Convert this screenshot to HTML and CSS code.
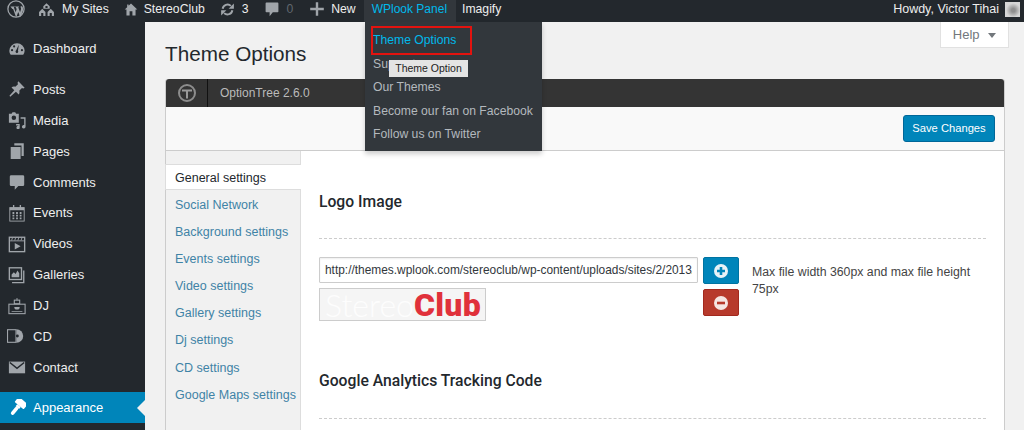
FILE: index.html
```html
<!DOCTYPE html>
<html lang="en">
<head>
  <meta charset="UTF-8" />
  <meta name="viewport" content="width=device-width, initial-scale=1.0" />
  <title>Theme Options</title>
  <link rel="stylesheet" href="styles.css">
</head>
<body>

  <header class="adminbar">
    <div class="bar-left">
      <span class="bar-item bar-logo">
        <svg class="wp-big" viewBox="0 0 20 20"><circle cx="10" cy="10" r="9" fill="none" stroke="#a0a5aa" stroke-width="1.400"/><path d="M3.800 7.300h4.800v.6l-1 .2 2 5.600 1.100-3.300-.8-2.300-.8-.2v-.6h4.300v.6l-.9.2 2 5.500.9-2.800c.5-1.600-.1-2.600-.6-3.300.5-.9 2-.7 2.300-.2.900 1.400.9 3.600.5 5l-2.500 6.300-.6.100-2-5.500-2 5.500-.6-.1-3.100-8.500-.8-.2z" fill="#a0a5aa"/></svg>
      </span>
      <span class="bar-item bar-sites">
        <svg class="sites" viewBox="0 0 24 20"><path d="M12 1l4.500 4.500v3.500h-9v-3.500zM6 9l4.500 4.500v5.500h-9v-5.500zM18 9l4.500 4.500v5.500h-9v-5.500z" fill="#a0a5aa"/><path d="M4.500 15h3v4h-3zM16.500 15h3v4h-3zM10.500 5h3v3h-3z" fill="#23282d"/></svg>
        My Sites
      </span>
      <span class="bar-item">
        <svg class="home" viewBox="0 0 20 20"><path d="M10 1.500l9 8.500h-2.500v8.500h-4.500v-6h-4v6h-4.500v-8.500h-2.500l3.500-3.300v-3.700h2v1.800z" fill="#a0a5aa"/></svg>
        StereoClub
      </span>
      <span class="bar-item">
        <svg class="sync" viewBox="0 0 20 20"><path d="M3.500 9a6.600 6.600 0 0 1 11-3.800M16.500 11a6.600 6.600 0 0 1-11 3.800" fill="none" stroke="#a0a5aa" stroke-width="2.600"/><path d="M18.500 2v7h-7zM1.500 18v-7h7z" fill="#a0a5aa"/></svg>
        3
      </span>
      <span class="bar-item bar-dim">
        <svg class="bar-icon" viewBox="0 0 20 20"><path d="M3 2h14a1 1 0 0 1 1 1v10a1 1 0 0 1-1 1h-6l-4 5v-5h-4a1 1 0 0 1-1-1v-10a1 1 0 0 1 1-1z" fill="#a0a5aa"/></svg>
        0
      </span>
      <span class="bar-item bar-new">
        <svg class="bar-icon" viewBox="0 0 20 20"><path d="M8.500 1.500h3v7h7v3h-7v7h-3v-7h-7v-3h7z" fill="#a0a5aa"/></svg>
        New
      </span>
      <span class="bar-item bar-open">WPlook Panel</span>
      <span class="bar-item bar-imagify">Imagify</span>
    </div>
    <div class="bar-right">
      Howdy, Victor Tihai
      <span class="avatar"></span>
    </div>
  </header>

  <div class="wrap">
    <nav class="sidebar">
      <ul class="menu">
        <li class="menu-item"><svg class="menu-icon" viewBox="0 0 20 20"><path d="M10 3.500a8.500 8.500 0 0 0-8.500 8.500c0 1.800.6 3.300 1.600 4.500h13.800a8.500 8.500 0 0 0 1.600-4.500 8.500 8.500 0 0 0-8.500-8.500zM4.500 12.500a1.200 1.200 0 1 1 0-2.400 1.200 1.200 0 0 1 0 2.400zM6.800 8.300a1.200 1.200 0 1 1 0-2.400 1.200 1.200 0 0 1 0 2.400zM10 14.600a1.700 1.700 0 0 1-.9-3.100l2.900-6.200-.9 6.700a1.700 1.700 0 0 1-1.100 2.600zM15.500 12.500a1.200 1.200 0 1 1 0-2.400 1.200 1.200 0 0 1 0 2.400z" fill="#a0a5aa" fill-rule="evenodd"/></svg>Dashboard</li>
      </ul>
      <ul class="menu">
        <li class="menu-item"><svg class="menu-icon" viewBox="0 0 20 20"><path d="M11.500 1.500l7 7-1.500 1-1.500-.5-3 3c.5 1.500.3 3-.6 4.200l-3.100-3.100-6.300 5.400-.9-.9 5.400-6.300-3.100-3.100c1.200-.9 2.700-1.100 4.200-.6l3-3-.5-1.500z" fill="#a0a5aa"/></svg>Posts</li>
        <li class="menu-item"><svg class="menu-icon" viewBox="0 0 20 20"><path d="M1 3h3l1-1.500h3l1 1.500h3v10h-11zM6.500 5a2.500 2.500 0 1 0 0 5 2.500 2.500 0 0 0 0-5z" fill="#a0a5aa" fill-rule="evenodd"/><path d="M14 7h5.500v10.500a2 2 0 1 1-1.500-1.900v-7.100h-4zM9 14.500h4v4a1.800 1.800 0 1 1-1.500-1.800v-.7h-2.500z" fill="#a0a5aa"/></svg>Media</li>
        <li class="menu-item"><svg class="menu-icon" viewBox="0 0 20 20"><path d="M7 1.500h10.500v14h-2.500v-11.500h-8zM3 5.500h11v13.500h-11z" fill="#a0a5aa"/></svg>Pages</li>
        <li class="menu-item"><svg class="menu-icon" viewBox="0 0 20 20"><path d="M3.500 2.500h13a1.500 1.500 0 0 1 1.500 1.500v9a1.500 1.500 0 0 1-1.500 1.500h-5l-4 4v-4h-4a1.500 1.500 0 0 1-1.500-1.500v-9a1.500 1.500 0 0 1 1.500-1.500z" fill="#a0a5aa"/></svg>Comments</li>
        <li class="menu-item"><svg class="menu-icon" viewBox="0 0 20 20"><rect x="2" y="4" width="16" height="15" fill="none" stroke="#a0a5aa"/><path d="M2 4h16v3h-16zM5.500 1h1.500v4h-1.500zM13 1h1.500v4h-1.500z" fill="#a0a5aa"/><path d="M5 9h2v2h-2zM9 9h2v2h-2zM13 9h2v2h-2zM5 12h2v2h-2zM9 12h2v2h-2zM13 12h2v2h-2zM5 15h2v2h-2zM9 15h2v2h-2zM13 15h2v2h-2z" fill="#a0a5aa"/></svg>Events</li>
        <li class="menu-item"><svg class="menu-icon" viewBox="0 0 20 20"><rect x="1.500" y="2.500" width="17" height="16" fill="none" stroke="#a0a5aa" stroke-width="1.500"/><path d="M2 6.500h16M5 3l-1 3M8.500 3l-1 3M12 3l-1 3M15.500 3l-1 3" fill="none" stroke="#a0a5aa"/><path d="M7.500 9l6.500 3.500-6.500 3.500z" fill="#a0a5aa"/></svg>Videos</li>
        <li class="menu-item"><svg class="menu-icon" viewBox="0 0 20 20"><rect x="1.500" y="2" width="13.500" height="13" fill="none" stroke="#a0a5aa" stroke-width="1.500"/><path d="M4 12.500v-3l2.500-2.500 2 2 2-4 2 3v4.500z" fill="#a0a5aa"/><path d="M17.500 5v13.500h-13" fill="none" stroke="#a0a5aa" stroke-width="1.500"/></svg>Galleries</li>
        <li class="menu-item"><svg class="menu-icon" viewBox="0 0 20 20"><rect x="7" y="3.500" width="6" height="4" fill="none" stroke="#a0a5aa" stroke-width="1.200"/><path d="M9.500 1h1v2.500h-1z" fill="#a0a5aa"/><rect x="1" y="8" width="18" height="10.500" fill="none" stroke="#a0a5aa" stroke-width="1.200"/><path d="M4 15.500h12v1h-12zM7 11a3 3 0 0 0 6 0z" fill="#a0a5aa"/></svg>DJ</li>
        <li class="menu-item"><svg class="menu-icon cd-icon" viewBox="0 0 20 20"><rect x=".6" y="3" width="9.400" height="14" fill="none" stroke="#a0a5aa" stroke-width="1.200"/><path d="M10.500 2.500a7.500 7.500 0 0 1 0 15z" fill="#a0a5aa"/><circle cx="11.500" cy="10" r="1.600" fill="#23282d"/></svg>CD</li>
        <li class="menu-item"><svg class="menu-icon" viewBox="0 0 20 20"><rect x="1" y="4" width="18" height="13" fill="#a0a5aa"/><path d="M2 5l8 6.500 8-6.500" fill="none" stroke="#23282d" stroke-width="1.600"/></svg>Contact</li>
      </ul>
      <ul class="menu">
        <li class="menu-item menu-current"><svg class="menu-icon" viewBox="0 0 20 20"><g transform="rotate(40 10 10)" fill="#fff"><rect x="3.500" y="-1" width="13" height="7.500" rx="1"/><rect x="7.500" y="6.500" width="5" height="3"/><rect x="8" y="9" width="4" height="10.500" rx="2"/></g></svg>Appearance</li>
      </ul>
    </nav>

    <main class="content">
      <button class="help-tab">Help <span class="help-arrow"></span></button>
      <h1 class="page-title">Theme Options</h1>

      <section class="panel">
        <div class="panel-head">
          <span class="panel-logo">
            <svg width="18" height="18" viewBox="0 0 18 18"><circle cx="9" cy="9" r="8" fill="none" stroke="#8d8d8d" stroke-width="2"/><path d="M4 5.500h10v2h-4v7h-2v-7h-4z" fill="#999"/></svg>
          </span>
          <span class="panel-version">OptionTree 2.6.0</span>
        </div>
        <div class="panel-actions">
          <button class="btn-save">Save Changes</button>
        </div>
        <div class="panel-body">
          <ul class="tabs">
            <li class="tab tab-active">General settings</li>
            <li class="tab">Social Network</li>
            <li class="tab">Background settings</li>
            <li class="tab">Events settings</li>
            <li class="tab">Video settings</li>
            <li class="tab">Gallery settings</li>
            <li class="tab">Dj settings</li>
            <li class="tab">CD settings</li>
            <li class="tab">Google Maps settings</li>
          </ul>
          <div class="settings">
            <h2 class="setting-title">Logo Image</h2>
            <div class="setting-row">
              <div class="upload">
                <input class="upload-input" type="text" value="http://themes.wplook.com/stereoclub/wp-content/uploads/sites/2/2013/06/logo.png">
                <div class="thumb"><span class="thumb-light">Stereo</span><span class="thumb-red">Club</span></div>
              </div>
              <div class="upload-btns">
                <span class="icon-btn icon-blue"><svg width="14" height="14" viewBox="0 0 14 14"><circle cx="7" cy="7" r="7" fill="#e8f2f7"/><path d="M5.700 3h2.600v2.700h2.700v2.600h-2.700v2.700h-2.600v-2.700h-2.700v-2.600h2.700z" fill="#0085ba"/></svg></span>
                <span class="icon-btn icon-red"><svg width="14" height="14" viewBox="0 0 14 14"><circle cx="7" cy="7" r="7" fill="#f5e6e3"/><path d="M3 5.700h8v2.600h-8z" fill="#b73a2c"/></svg></span>
              </div>
              <p class="setting-desc">Max file width 360px and max file height 75px</p>
            </div>
            <h2 class="setting-title setting-next">Google Analytics Tracking Code</h2>
          </div>
        </div>
      </section>
    </main>
  </div>

  <!-- dropdown from the admin bar, lies over the page -->
  <div class="dropdown">
    <a class="drop-link drop-current">Theme Options</a>
    <a class="drop-link">Support</a>
    <a class="drop-link">Our Themes</a>
    <a class="drop-link">Become our fan on Facebook</a>
    <a class="drop-link">Follow us on Twitter</a>
  </div>
  <div class="red-box"></div>
  <div class="tooltip">Theme Option</div>

</body>
</html>
```
FILE: styles.css
```css
:root {
  --bar: #23282d;
  --grey: #a0a5aa;
  --menu-text: #eee;
  --blue: #0085ba;
  --link: #3f83a6;
}

* {
  box-sizing: border-box;
}

html, body {
  height: 430px;
  overflow: hidden;
}

body {
  margin: 0;
  font-family: "Liberation Sans", Arial, sans-serif;
  font-size: 13px;
  color: #23282d;
  background-color: #f1f1f1;
}

ul {
  list-style: none;
  margin: 0;
  padding: 0;
}

/* admin bar */
.adminbar {
  height: 22px;
  background-color: var(--bar);
  color: #eee;
  display: flex;
  justify-content: space-between;
}

.bar-left {
  display: flex;
}

.bar-item {
  display: flex;
  align-items: center;
  gap: 6px;
  margin-left: 15px;
  padding-bottom: 4px;
  white-space: nowrap;
  font-size: 12.200px;
}

.bar-logo {
  margin-left: 7px;
}

.bar-sites {
  margin-left: 13px;
  gap: 7px;
}

.bar-dim {
  color: #60676d;
  gap: 7px;
}

.bar-new {
  margin-left: 16px;
}

.bar-open {
  background-color: #32373c;
  color: #00b9eb;
  margin-left: 8px;
  padding: 0 9px 4px 8px;
  font-size: 12px;
}

.bar-imagify {
  margin-left: 6px;
}

.bar-icon {
  width: 16px;
  height: 16px;
}

.home {
  width: 14px;
  height: 15px;
}

.sync {
  width: 15px;
  height: 15px;
  margin-right: 1px;
}

.wp-big {
  width: 18px;
  height: 18px;
}

.sites {
  width: 17px;
  height: 15px;
}

.bar-right {
  display: flex;
  align-items: center;
  gap: 6px;
  padding: 0 4px 4px 0;
  font-size: 12.500px;
}

.avatar {
  width: 15px;
  height: 15px;
  background: radial-gradient(circle at 55% 55%, #8e8e8e 15%, #d6d6d6 60%);
}

/* side menu */
.wrap {
  display: flex;
  height: 408px;
}

.sidebar {
  width: 145px;
  flex-shrink: 0;
  background-color: var(--bar);
  padding-top: 11.500px;
}

.menu {
  margin-bottom: 9.500px;
}

.menu-item {
  position: relative;
  height: 30.900px;
  display: flex;
  align-items: center;
  gap: 7px;
  padding-left: 8px;
  color: var(--menu-text);
  font-size: 13px;
}

.menu-icon {
  width: 18px;
  height: 18px;
  flex-shrink: 0;
}

.cd-icon {
  margin-left: -1px;
  margin-right: 1px;
}

.menu-current {
  background-color: var(--blue);
  color: #fff;
}

.menu-current::after {
  content: "";
  position: absolute;
  right: 0;
  top: 8px;
  border: 8px solid transparent;
  border-right-color: #f1f1f1;
  border-left-width: 0;
}

/* page */
.content {
  position: relative;
  flex: 1;
  min-width: 0;
  padding: 0 19px 0 20px;
}

.help-tab {
  position: absolute;
  top: 0;
  right: 15px;
  width: 69px;
  height: 26px;
  border: 1px solid #e1e1e1;
  border-top: none;
  background-color: #fff;
  color: #72777c;
  font-family: inherit;
  font-size: 13px;
  padding: 0;
}

.help-arrow {
  display: inline-block;
  margin-left: 5px;
  vertical-align: 1px;
  border: 4px solid transparent;
  border-top: 5px solid #72777c;
  border-bottom: none;
}

.page-title {
  margin: 0;
  padding-top: 19px;
  height: 57px;
  font-size: 20.700px;
  line-height: 26px;
  font-weight: 400;
  color: #23282d;
}

.panel {
  border: 1px solid #ccc;
  border-top: none;
  border-radius: 3px 3px 0 0;
  background-color: #fff;
}

.panel-head {
  height: 28px;
  background-color: #343434;
  border-radius: 3px 3px 0 0;
  display: flex;
  align-items: center;
  color: #bbb;
  font-size: 12px;
}

.panel-logo {
  width: 42px;
  height: 100%;
  border-right: 1px solid #111;
  display: flex;
  align-items: center;
  justify-content: center;
}

.panel-version {
  padding-left: 12px;
}

.panel-actions {
  height: 44px;
  background-color: #f9f9f9;
  border-bottom: 1px solid #ccc;
  display: flex;
  justify-content: flex-end;
  align-items: center;
  padding: 0 9px 1px 0;
}

.btn-save {
  width: 92px;
  height: 27px;
  background-color: var(--blue);
  border: 1px solid #006799;
  border-radius: 3px;
  color: #fff;
  font-family: inherit;
  font-size: 11.200px;
  padding: 0;
}

.panel-body {
  display: flex;
  height: 290px;
}

/* tabs on the left */
.tabs {
  width: 135px;
  flex-shrink: 0;
  background-color: #f1f1f1;
  border-right: 1px solid #ddd;
  padding-top: 13px;
}

.tab {
  height: 27.100px;
  line-height: 27px;
  padding-left: 9px;
  color: var(--link);
  font-size: 12.500px;
  white-space: nowrap;
}

.tab-active {
  height: 26px;
  line-height: 26px;
  margin: 0 -1px 2px -1px;
  padding-left: 9px;
  background-color: #fff;
  border: 1px solid #ddd;
  border-right: none;
  color: #23282d;
}

/* right side */
.settings {
  flex: 1;
  padding: 0 18px;
}

.setting-title {
  margin: 0;
  padding-top: 42px;
  font-family: Roboto, "Liberation Sans", sans-serif;
  font-size: 15.700px;
  line-height: 18px;
  font-weight: 500;
  color: #23282d;
  height: 88px;
  border-bottom: 1px dashed #ccc;
}

.setting-next {
  padding-top: 0;
  margin-top: 51px;
  height: 47px;
}

.setting-row {
  display: flex;
  padding-top: 18px;
}

.upload {
  width: 379px;
  flex-shrink: 0;
}

.upload-input {
  display: block;
  width: 100%;
  height: 26px;
  border: 1px solid #ccc;
  border-radius: 1px;
  padding: 0 5px;
  font-family: inherit;
  font-size: 11.900px;
  color: #32373c;
  box-shadow: inset 0 1px 2px rgba(0, 0, 0, 0.07);
}

.thumb {
  width: 167px;
  height: 33px;
  margin-top: 5px;
  padding: 0 5px;
  border: 1px solid #ccc;
  background-color: #f5f5f5;
  display: flex;
  align-items: center;
  white-space: nowrap;
}

.thumb-light {
  font-size: 32px;
  line-height: 30px;
  color: #fdfdfd;
  font-family: Lato, sans-serif;
  font-weight: 300;
}

.thumb-red {
  font-family: Roboto, sans-serif;
  font-size: 32px;
  line-height: 30px;
  font-weight: 900;
  color: #e0313b;
  letter-spacing: 0.3px;
}

.upload-btns {
  display: flex;
  flex-direction: column;
  gap: 5px;
  margin-left: 5px;
}

.icon-btn {
  width: 36px;
  height: 27px;
  border-radius: 2px;
  display: flex;
  align-items: center;
  justify-content: center;
}

.icon-blue {
  background-color: var(--blue);
  border: 1px solid #0073a1;
}

.icon-red {
  background-color: #b73a2c;
  border: 1px solid #a2291e;
}

.setting-desc {
  margin: 7px 0 0 13px;
  width: 232px;
  font-size: 12.300px;
  line-height: 17px;
  color: #444;
}

/* dropdown and things on top of it */
.dropdown {
  position: absolute;
  left: 365px;
  top: 22px;
  width: 177px;
  height: 129px;
  padding-top: 7px;
  background-color: #32373c;
  box-shadow: 0 3px 5px rgba(0, 0, 0, 0.2);
}

.drop-link {
  display: block;
  height: 23.500px;
  line-height: 23.500px;
  padding-left: 8px;
  color: #b4b9be;
  font-size: 12.200px;
  white-space: nowrap;
}

.drop-current {
  color: #00b9eb;
}

.red-box {
  position: absolute;
  left: 371px;
  top: 26px;
  width: 101px;
  height: 29px;
  border: 2px solid #e3130f;
}

.tooltip {
  position: absolute;
  left: 389px;
  top: 60px;
  width: 79px;
  height: 17px;
  line-height: 17px;
  text-align: center;
  background-color: #e4e4e4;
  color: #222;
  font-size: 10.500px;
}
```
